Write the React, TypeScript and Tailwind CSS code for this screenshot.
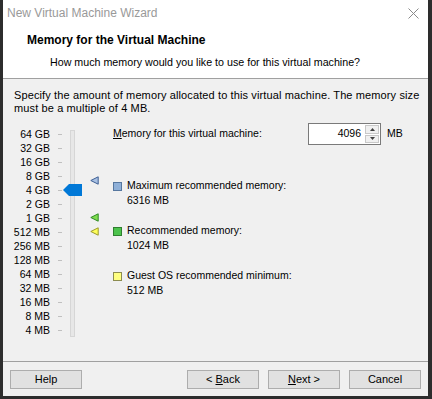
export default function App() {
  const labels = ["64 GB", "32 GB", "16 GB", "8 GB", "4 GB", "2 GB", "1 GB", "512 MB", "256 MB", "128 MB", "64 MB", "32 MB", "16 MB", "8 MB", "4 MB"];
  return (
    <div className="w-[432px] h-[399px] flex flex-col bg-[#f0f0f0] border-l-[3px] border-r-[4px] border-b-[3px] border-[#2d2d2d] font-['Liberation_Sans',Arial,sans-serif] text-[10.5px] text-black overflow-hidden">
      <div className="bg-white h-[79px] shrink-0 flex flex-col border-b border-[#a0a0a0]">
        <div className="h-[26px] flex items-center justify-between pl-[4px] pr-[9px]">
          <span className="text-[12px] text-[#999999]">New Virtual Machine Wizard</span>
          <svg width="11" height="11" viewBox="0 0 11 11">
            <path d="M0.5 0.5 L10.5 10.5 M10.5 0.5 L0.5 10.5" stroke="#8a8a8a" strokeWidth="1" />
          </svg>
        </div>
        <div className="mt-[7px] pl-[24px] text-[12px] font-bold leading-[14px]">Memory for the Virtual Machine</div>
        <div className="mt-[8px] pl-[47px] text-[10.7px] leading-[14px]">How much memory would you like to use for this virtual machine?</div>
      </div>

      <div className="flex-1 flex flex-col">
        <div className="pt-[10px] pl-[11px] pr-[4px] text-[11px] leading-[13px] tracking-[0.12px]">
          Specify the amount of memory allocated to this virtual machine. The memory size must be a multiple of 4 MB.
        </div>

        <div className="mt-[8px] flex flex-1">
          <div className="relative w-[110px]">
            <div className="flex pt-[4px]">
              <div className="flex flex-col w-[47px] text-right">
                {labels.map((l) => (
                  <div key={l} className="h-[14px] leading-[14px]">{l}</div>
                ))}
              </div>
              <div className="flex flex-col ml-[8px] w-[4px]">
                {labels.map((l) => (
                  <div key={l} className="h-[14px] flex items-center">
                    <div className="w-[4px] h-[1px] bg-[#c0c0c0]" />
                  </div>
                ))}
              </div>
            </div>
            <div className="absolute left-[67px] top-[7px] w-[5px] h-[207px] border border-[#d6d6d6] bg-[#e7e7e7]" />
            <svg className="absolute left-[60px] top-[61px]" width="19" height="12" viewBox="0 0 19 12">
              <path d="M0 6 L6 0 H19 V12 H6 Z" fill="#0078d7" />
            </svg>
            <svg className="absolute left-[87px] top-[53px]" width="9" height="9" viewBox="0 0 9 9">
              <path d="M0.8 4.5 L8.2 0.8 V8.2 Z" fill="#a9c1e3" stroke="#3d5f94" strokeWidth="1" strokeLinejoin="round" />
            </svg>
            <svg className="absolute left-[87px] top-[90px]" width="9" height="9" viewBox="0 0 9 9">
              <path d="M0.8 4.5 L8.2 0.8 V8.2 Z" fill="#7fdc4f" stroke="#2d8a25" strokeWidth="1" strokeLinejoin="round" />
            </svg>
            <svg className="absolute left-[87px] top-[104px]" width="9" height="9" viewBox="0 0 9 9">
              <path d="M0.8 4.5 L8.2 0.8 V8.2 Z" fill="#ffff5a" stroke="#9a9a2a" strokeWidth="1" strokeLinejoin="round" />
            </svg>
          </div>

          <div className="flex flex-col text-[10.5px]">
            <div className="h-[22px] flex items-center">
              <span className="w-[195px]"><span className="underline">M</span>emory for this virtual machine:</span>
              <div className="w-[73px] h-[22px] flex border border-[#7a7a7a] bg-white">
                <div className="flex-1 flex items-center justify-end pr-[3px]">4096</div>
                <div className="w-[16px] flex flex-col p-[1px] gap-[1px]">
                  <div className="flex-1 bg-[#f0f0f0] border border-[#c8c8c8] flex items-center justify-center">
                    <svg width="5" height="3" viewBox="0 0 5 3"><path d="M0 3 L2.5 0 L5 3 Z" fill="#404040" /></svg>
                  </div>
                  <div className="flex-1 bg-[#f0f0f0] border border-[#c8c8c8] flex items-center justify-center">
                    <svg width="5" height="3" viewBox="0 0 5 3"><path d="M0 0 L2.5 3 L5 0 Z" fill="#404040" /></svg>
                  </div>
                </div>
              </div>
              <span className="ml-[6px]">MB</span>
            </div>

            <div className="mt-[34px] flex flex-col">
              <div className="flex items-center h-[14px]">
                <div className="w-[9px] h-[9px] border border-[#56779f] bg-[#8fb0d8] mr-[5px]" />
                <span>Maximum recommended memory:</span>
              </div>
              <div className="pl-[14px] h-[14px] leading-[14px]">6316 MB</div>
            </div>

            <div className="mt-[17px] flex flex-col">
              <div className="flex items-center h-[14px]">
                <div className="w-[9px] h-[9px] border border-[#2f7f2f] bg-[#4cc34c] mr-[5px]" />
                <span>Recommended memory:</span>
              </div>
              <div className="pl-[14px] h-[14px] leading-[14px]">1024 MB</div>
            </div>

            <div className="mt-[17px] flex flex-col">
              <div className="flex items-center h-[14px]">
                <div className="w-[9px] h-[9px] border border-[#8c8c50] bg-[#ffff80] mr-[5px]" />
                <span>Guest OS recommended minimum:</span>
              </div>
              <div className="pl-[14px] h-[14px] leading-[14px]">512 MB</div>
            </div>
          </div>
        </div>

        <div className="h-[1px] bg-[#a0a0a0]" />
        <div className="flex items-center pt-[8px] pb-[7px] pl-[7px] pr-[7px] text-[11px]">
          <div className="w-[72px] h-[19px] border border-[#adadad] bg-[#e1e1e1] flex items-center justify-center">Help</div>
          <div className="flex-1" />
          <div className="w-[72px] h-[19px] border border-[#adadad] bg-[#e1e1e1] flex items-center justify-center">&lt; <span className="underline ml-[3px]">B</span>ack</div>
          <div className="ml-[9px] w-[72px] h-[19px] border border-[#adadad] bg-[#e1e1e1] flex items-center justify-center"><span className="underline">N</span>ext &gt;</div>
          <div className="ml-[9px] w-[72px] h-[19px] border border-[#adadad] bg-[#e1e1e1] flex items-center justify-center">Cancel</div>
        </div>
      </div>
    </div>
  );
}
